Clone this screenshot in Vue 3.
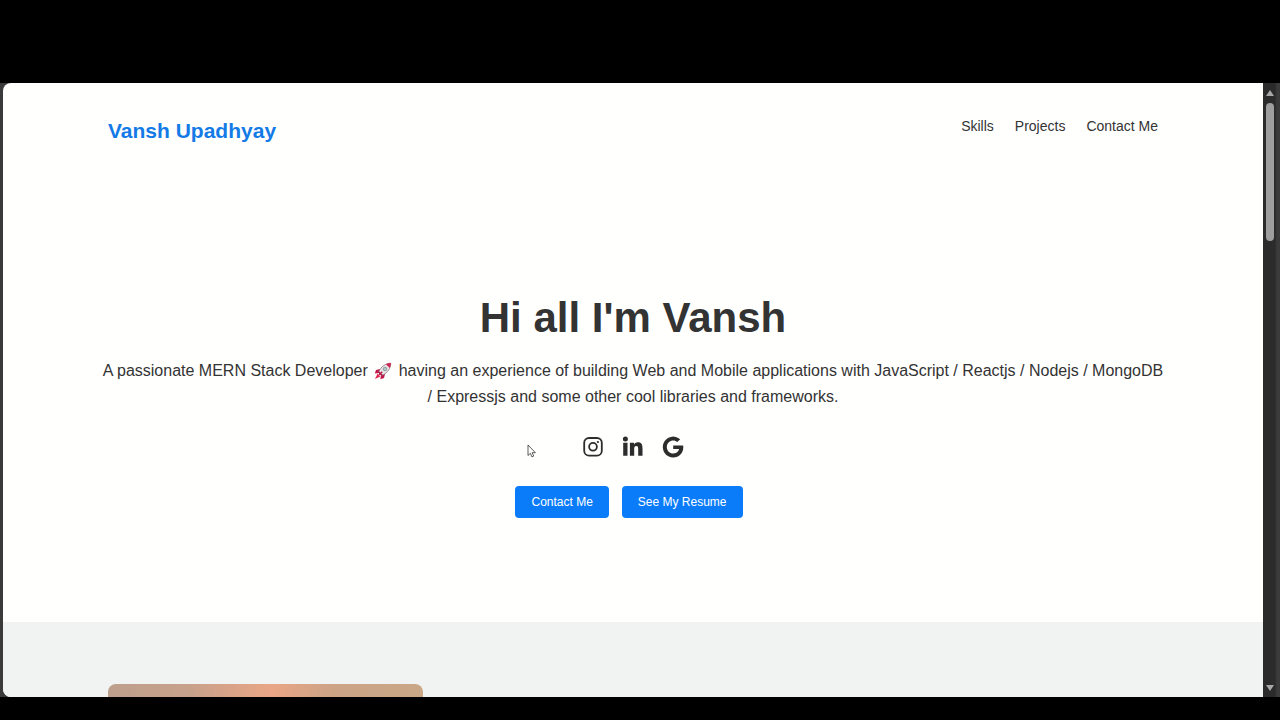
<script setup>
const links = [
  { label: 'Skills', href: '#skills' },
  { label: 'Projects', href: '#projects' },
  { label: 'Contact Me', href: '#contact' },
]
</script>

<template>
  <div class="screen">
    <div class="window">
      <div class="page">
        <header class="container header">
          <a class="logo" href="#top">Vansh Upadhyay</a>
          <nav class="nav">
            <a v-for="link in links" :key="link.label" :href="link.href">{{ link.label }}</a>
          </nav>
        </header>

        <main class="container hero">
          <h1>Hi all I'm Vansh</h1>
          <p>
            A passionate MERN Stack Developer
            <svg class="rocket" viewBox="0 0 18 18" aria-label="rocket" role="img">
              <path d="M6 7 2 8 .8 11.4 5 11zM11 12l-1 4-3.6 1.2L7 13z" fill="#c2184c" />
              <path d="M3.6 11.6 1 17l5.4-2.6z" fill="#e2284f" />
              <path d="M16.8 1.2C12 1.2 7.2 4 4.4 10.4l3.2 3.2C14 10.8 16.8 6 16.8 1.2z" fill="#e6e4e4" stroke="#73515d" stroke-width=".6" />
              <path d="M16.9 1.1c-1.8 0-3.4.4-5 1.2l3.8 3.8c.8-1.6 1.2-3.2 1.2-5z" fill="#cf2453" />
              <path d="m4.9 9.2 3.9 3.9-1.4.7-3.2-3.2z" fill="#a4123f" />
              <circle cx="11" cy="7" r="1.8" fill="#a5cccd" stroke="#77777b" stroke-width=".6" />
              <path d="m5.2 12.8 3-3" stroke="#b81844" stroke-width="1.5" />
            </svg>
            having an experience of building Web and Mobile applications with JavaScript / Reactjs / Nodejs / MongoDB / Expressjs and some other cool libraries and frameworks.
          </p>
          <div class="social">
            <a href="#instagram" aria-label="Instagram">
              <svg viewBox="0 0 22 22" fill="none" stroke="currentColor" stroke-width="1.8">
                <rect x="2.2" y="2" width="17.6" height="17.6" rx="4.800" />
                <circle cx="11" cy="10.800" r="3.900" />
                <circle cx="15.900" cy="6" r="1.100" fill="currentColor" stroke="none" />
              </svg>
            </a>
            <a href="#linkedin" aria-label="LinkedIn">
              <svg viewBox="0 0 22 22" fill="currentColor">
                <circle cx="3.400" cy="2.900" r="2.500" />
                <path d="M1.200 6.700h4.300v13H1.200zM7.900 6.700H12v1.700h.1c.6-1.100 1.800-2.100 3.700-2.100 4 0 4.700 2.700 4.700 6.200v7.200h-4.300v-6.300c0-1.500 0-3.300-1.900-3.300s-2.100 1.600-2.100 3.200v6.400H7.900z" />
              </svg>
            </a>
            <a href="#google" aria-label="Google">
              <svg viewBox="0 0 22 22" fill="currentColor">
                <path d="M21.300 11.200c0 6-4.100 10.200-10.100 10.200A10.400 10.400 0 1 1 18.200 3.300l-2.900 2.800C11.600 2.500 4.800 5.200 4.800 11c0 3.600 2.900 6.600 6.400 6.600 4.100 0 5.700-3 5.900-4.500h-5.900V9.400h9.900c.1.600.2 1.100.2 1.800z" />
              </svg>
            </a>
          </div>
          <div class="actions">
            <button type="button">Contact Me</button>
            <button type="button">See My Resume</button>
          </div>
        </main>

        <section class="about">
          <div class="container about-inner">
            <div class="photo"></div>
          </div>
        </section>
      </div>

      <div class="scrollbar" aria-hidden="true">
        <svg class="arrow" viewBox="0 0 8 6"><path d="M4 0 8 6H0z" /></svg>
        <div class="track"><div class="thumb"></div></div>
        <svg class="arrow" viewBox="0 0 8 6"><path d="M0 0h8L4 6z" /></svg>
      </div>
    </div>

    <svg class="cursor" viewBox="0 0 9 14" aria-hidden="true">
      <path d="M1 1v10.500l2.400-2.200 1.500 3.600 1.800-.8-1.500-3.400H8.400z" fill="#fff" stroke="#333" stroke-width=".8" />
    </svg>
  </div>
</template>

<style>
body {
  margin: 0;
  background: #000;
}
</style>

<style scoped>
.screen {
  position: relative;
  box-sizing: border-box;
  min-height: 100vh;
  display: flex;
  flex-direction: column;
  padding: 83px 0 23px;
  background: #000;
  color: #333;
  font-family: "Liberation Sans", Arial, sans-serif;
}
.window {
  flex: 1;
  display: flex;
  padding-left: 3px;
  background: #3a3a3a;
}
.page {
  flex: 1;
  display: flex;
  flex-direction: column;
  overflow: hidden;
  border-radius: 8px 0 0 8px;
  background: #fffffe;
}
.container {
  box-sizing: border-box;
  width: 100%;
  max-width: 1050px;
  margin: 0 auto;
}
.header {
  display: flex;
  justify-content: space-between;
  align-items: flex-start;
  padding-top: 35px;
}
.logo {
  color: #147ae6;
  font-size: 21px;
  font-weight: 700;
  line-height: 26px;
  text-decoration: none;
}
.nav {
  display: flex;
  gap: 21px;
}
.nav a {
  color: #333;
  font-size: 14px;
  line-height: 16px;
  text-decoration: none;
}
.hero {
  padding: 148px 0 104px;
  text-align: center;
}
h1 {
  margin: 0 0 14px;
  font-size: 42px;
  line-height: 52px;
}
p {
  margin: 0 -8px;
  font-size: 16px;
  line-height: 26px;
}
.rocket {
  width: 18px;
  height: 18px;
  margin: 0 2px;
  vertical-align: -4px;
}
.social {
  display: flex;
  justify-content: center;
  gap: 18px;
  margin-top: 26px;
}
.social a {
  color: #2d2d2d;
}
.social svg {
  display: block;
  width: 22px;
  height: 22px;
}
.actions {
  display: flex;
  justify-content: center;
  gap: 13px;
  margin: 28px 8px 0 0;
}
button {
  height: 32px;
  padding: 0 16px;
  border: 0;
  border-radius: 4px;
  background: #0a7cfa;
  color: #fff;
  font-family: inherit;
  font-size: 12px;
}
.about {
  flex: 1;
  display: flex;
  padding-top: 62px;
  background: #f1f3f3;
}
.about-inner {
  display: flex;
}
.photo {
  width: 30%;
  min-height: 13px;
  border-radius: 8px 8px 0 0;
  background: linear-gradient(90deg, #bd9f8d 0%, #c7a18b 25%, #e9a586 52%, #cca386 72%, #c9a787 100%);
}
.scrollbar {
  width: 17px;
  box-sizing: border-box;
  display: flex;
  flex-direction: column;
  align-items: center;
  padding: 7px 4px 6px 0;
  background: linear-gradient(90deg, #2b2b2b 12px, #3b3b3b 14px);
}
.arrow {
  width: 8px;
  height: 6px;
  fill: #a8a8a8;
}
.track {
  flex: 1;
  padding-top: 7px;
}
.thumb {
  width: 8px;
  height: 138px;
  border-radius: 4px;
  background: #9e9e9e;
}
.cursor {
  position: absolute;
  left: 527px;
  top: 444px;
  width: 9px;
  height: 14px;
}
</style>
